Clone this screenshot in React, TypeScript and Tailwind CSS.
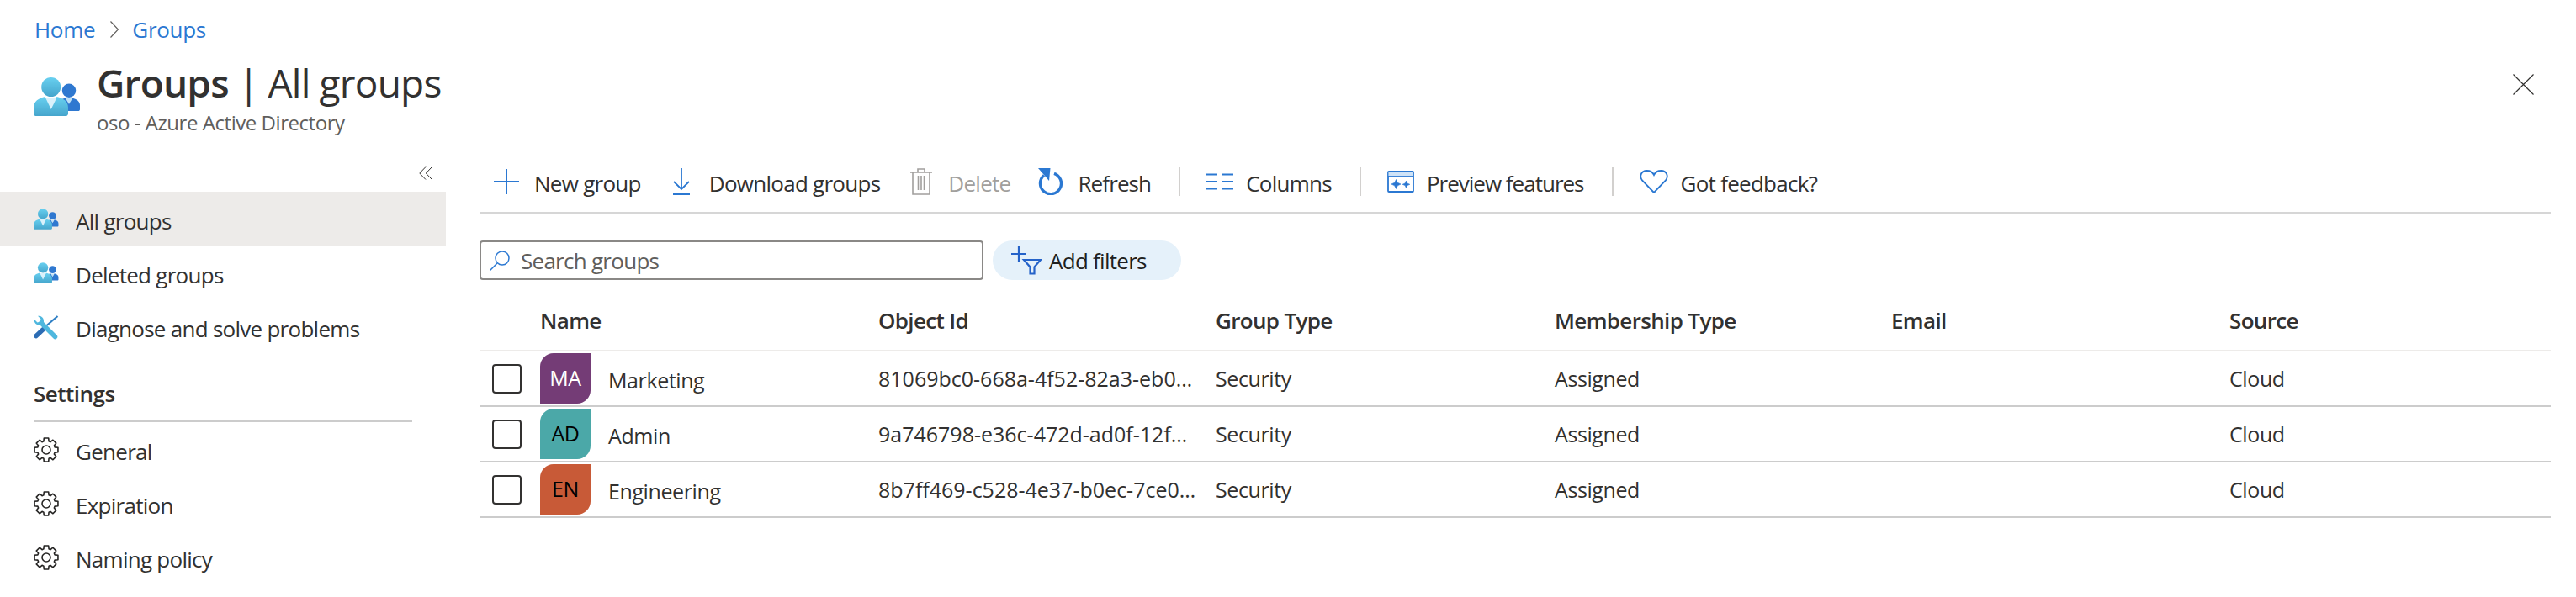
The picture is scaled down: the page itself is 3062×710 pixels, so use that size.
const F = "font-['Open_Sans',sans-serif]";

const gearPath = (() => {
  const pts: string[] = [];
  const p = (deg: number, r: number) => {
    const a = ((deg - 90) * Math.PI) / 180;
    return `${(15 + r * Math.cos(a)).toFixed(2)} ${(15 + r * Math.sin(a)).toFixed(2)}`;
  };
  for (let i = 0; i < 8; i++) {
    const c = i * 45;
    pts.push(p(c - 11, 14.2), p(c + 11, 14.2), p(c + 17, 10.6), p(c + 28, 10.6));
  }
  return "M" + pts.join("L") + "Z";
})();

function GroupsIcon({ className }: { className: string }) {
  return (
    <svg viewBox="0 0 56 46" className={className}>
      <defs>
        <linearGradient id="gfront" x1="0" y1="0" x2="0" y2="1">
          <stop offset="0" stopColor="#68d0f0" />
          <stop offset="1" stopColor="#45a5cc" />
        </linearGradient>
      </defs>
      <circle cx="42" cy="15.700" r="8.200" fill="#2f78d0" />
      <path d="M33 26l5-1.500 4 6 4-6 4 1.500c3 1.500 5 4 5 7v5c0 1.500-1 2-2 2H33z" fill="#2f78d0" />
      <path d="M38 25h8l-4 7z" fill="#bfe0f5" />
      <circle cx="20.700" cy="11.500" r="11.500" fill="url(#gfront)" />
      <path d="M0 43v-7c0-8 6-11 13.500-13l7 10 7-10C35 25 41 28 41 36v7c0 1.500-1 3-2.500 3h-36C1 46 0 44.500 0 43z" fill="url(#gfront)" />
      <path d="M14 24h13.500l-6.800 14z" fill="#d9f1fb" />
    </svg>
  );
}

function Gear() {
  return (
    <svg viewBox="0 0 30 30" className="w-[30px] h-[30px] shrink-0 translate-y-[1px]" fill="none" stroke="#252423" strokeWidth="1.600" strokeLinejoin="round">
      <circle cx="15" cy="15" r="5" />
      <path d={gearPath} />
    </svg>
  );
}

function Wrench() {
  return (
    <svg viewBox="0 0 30 30" className="w-[30px] h-[30px] shrink-0 translate-y-[2px]" fill="none">
      <path d="M12 15L28.500 1" stroke="#2f7fc4" strokeWidth="2.200" />
      <path d="M3 24.500L11 17" stroke="#2c6cb4" strokeWidth="5.500" strokeLinecap="round" />
      <path d="M9 9L25.500 25.500" stroke="#4fb7de" strokeWidth="5.500" strokeLinecap="round" />
      <path d="M1 5l3.500 3.500 3-1 1-3L5 .8C9 0 12.500 3 12 8l-3 3c-4 1.500-9-1-8-6z" fill="#4fb7de" />
    </svg>
  );
}

function SideItem({ icon, label, active }: { icon: React.ReactNode; label: string; active?: boolean }) {
  return (
    <div className={`flex items-center h-16 pl-10 gap-5 text-[26px] tracking-[-0.73px] text-[#323130] ${active ? "bg-[#edebe9]" : ""}`}>
      {icon}
      <span className="translate-y-[3px]">{label}</span>
    </div>
  );
}

function ToolBtn({ icon, label, disabled, gap, className = "", tracking = "tracking-[-0.73px]" }: { icon: React.ReactNode; label: string; disabled?: boolean; gap: string; className?: string; tracking?: string }) {
  return (
    <div className={`flex items-center h-[34px] ${gap} ${className}`}>
      {icon}
      <span className={`text-[26px] ${tracking} translate-y-[2px] ${disabled ? "text-[#a19f9d]" : "text-[#323130]"}`}>{label}</span>
    </div>
  );
}

const Sep = ({ className }: { className: string }) => <div className={`w-[2px] h-[34px] bg-[#d2d0ce] ${className}`} />;

const rows = [
  { abbr: "MA", name: "Marketing", id: "81069bc0-668a-4f52-82a3-eb0…", bg: "bg-[#743c76]", fg: "text-white" },
  { abbr: "AD", name: "Admin", id: "9a746798-e36c-472d-ad0f-12f…", bg: "bg-[#4ba8a8]", fg: "text-black" },
  { abbr: "EN", name: "Engineering", id: "8b7ff469-c528-4e37-b0ec-7ce0…", bg: "bg-[#c85a37]", fg: "text-black" },
];

const COLS = "grid grid-cols-[72px_402px_401px_403px_400px_402px_382px] items-center";

export default function App() {
  return (
    <div className={`w-[3062px] h-[710px] overflow-hidden bg-white ${F}`}>
      <div className="flex items-center pl-[41px] pt-[16px] h-[54px] text-[26px] tracking-[-0.3px] text-[#2b78d2]">
        <span>Home</span>
        <svg viewBox="0 0 10 20" className="w-[10px] h-[20px] ml-[18px] mr-[16px]" fill="none" stroke="#605e5c" strokeWidth="1.200"><path d="M0.500 0.500L9.500 10L0.500 19.500" /></svg>
        <span>Groups</span>
      </div>
      <div className="flex items-start pl-10 pr-[50px] pt-[18px] h-[122px]">
        <GroupsIcon className="w-14 h-[46px] mt-[20px] shrink-0" />
        <div className="ml-[19px] flex-1 -mt-[4px]">
          <div className="text-[46px] tracking-[-0.8px] leading-[60px] text-[#323130]"><span className="font-semibold">Groups</span> | All groups</div>
          <div className="text-[24px] tracking-[-0.45px] leading-[34px] text-[#605e5c] mt-[1px]">oso - Azure Active Directory</div>
        </div>
        <svg viewBox="0 0 25 25" className="w-[25px] h-[25px] mt-[16px]" fill="none" stroke="#323130" strokeWidth="1.200"><path d="M0.500 0.500L24.500 24.500M24.500 0.500L0.500 24.500" /></svg>
      </div>
      <div className="flex">
        <div className="w-[530px] shrink-0">
          <div className="h-[52px] flex justify-end items-start pr-4 pt-[22px]">
            <svg viewBox="0 0 16 16" className="w-4 h-4" fill="none" stroke="#323130" strokeWidth="1"><path d="M8 0.500L0.800 8L8 15.500M15.500 0.500L8.300 8L15.500 15.500" /></svg>
          </div>
          <SideItem active icon={<GroupsIcon className="w-[30px] h-[25px] shrink-0" />} label="All groups" />
          <SideItem icon={<GroupsIcon className="w-[30px] h-[25px] shrink-0" />} label="Deleted groups" />
          <SideItem icon={<Wrench />} label="Diagnose and solve problems" />
          <div className="mx-10 h-[82px] pb-[12px] border-b-2 border-[#cccccc] text-[26px] tracking-[-0.5px] font-semibold text-[#323130] flex items-end">Settings</div>
          <SideItem icon={<Gear />} label="General" />
          <SideItem icon={<Gear />} label="Expiration" />
          <SideItem icon={<Gear />} label="Naming policy" />
        </div>
        <div className="ml-10 w-[2462px]">
          <div className="h-[78px] pt-[23px] border-b-2 border-[#d6d6d6] flex items-start pl-[17px]">
            <ToolBtn gap="gap-[18px]" icon={<svg viewBox="0 0 30 30" className="w-[30px] h-[30px]" fill="none" stroke="#2b78d2" strokeWidth="2"><path d="M15 0v30M0 15h30" /></svg>} label="New group" />
            <ToolBtn className="ml-[38px]" gap="gap-[23px]" icon={<svg viewBox="0 0 20 32" className="w-5 h-8" fill="none" stroke="#2b78d2" strokeWidth="1.800"><path d="M10 0v25M1 16l9 9 9-9M0 31h20" /></svg>} label="Download groups" />
            <ToolBtn className="ml-[36px]" gap="gap-[19px]" disabled icon={<svg viewBox="0 0 26 32" className="w-[26px] h-8" fill="none" stroke="#a19f9d" strokeWidth="1.600"><path d="M0 5h26M9 5V1h8v4M3 5v26h20V5M9.500 9v17M13 9v17M16.500 9v17" /></svg>} label="Delete" />
            <ToolBtn className="ml-[33px]" gap="gap-[16px]" tracking="tracking-[-0.9px]" icon={<svg viewBox="0 0 31 32" className="w-[31px] h-8" fill="none"><path d="M19 6.300A12.500 12.500 0 1 1 7 8.500" stroke="#2b78d2" strokeWidth="3.400" /><path d="M0 0h14.500l-1.500 15z" fill="#2b78d2" /></svg>} label="Refresh" />
            <Sep className="ml-[33px]" />
            <ToolBtn className="ml-[30px]" gap="gap-[15px]" icon={<svg viewBox="0 0 33 20" className="w-[33px] h-5" fill="none" stroke="#2b78d2" strokeWidth="2.200"><path d="M0 1.500h14M19 1.500h14M0 10h14M19 10h14M0 18.500h14M19 18.500h14" /></svg>} label="Columns" />
            <Sep className="ml-[33px]" />
            <ToolBtn className="ml-[31px]" gap="gap-[15px]" tracking="tracking-[-1px]" icon={<svg viewBox="0 0 32 26" className="w-8 h-[26px]" fill="none" stroke="#2b78d2" strokeWidth="1.800"><rect x="1" y="1" width="30" height="24" rx="1" /><path d="M1.500 2h29v4.500h-29z" fill="#cfe3f7" stroke="none" /><path d="M1 7h30" /><path d="M10.500 10.500l1.800 3.700 3.700 1.800-3.700 1.800-1.800 3.700-1.800-3.700-3.700-1.800 3.700-1.800z" fill="#2b78d2" strokeWidth="0.600" /><path d="M22.500 12l1.300 3 3 1.300-3 1.300-1.300 3-1.300-3-3-1.300 3-1.300z" fill="#2b78d2" strokeWidth="0.600" /></svg>} label="Preview features" />
            <Sep className="ml-[33px]" />
            <ToolBtn className="ml-[31px]" gap="gap-[15px]" icon={<svg viewBox="0 0 34 28" className="w-[34px] h-7" fill="none" stroke="#2b78d2" strokeWidth="1.800"><path d="M17 27L3 12.500C-.5 8 1.500 1 8.500 1c4 0 7 2 8.500 5C18.500 3 21.500 1 25.500 1c7 0 9 7 5.500 11.500z" /></svg>} label="Got feedback?" />
          </div>
          <div className="flex gap-[11px] mt-[32px] h-[47px]">
            <div className="w-[599px] h-[47px] border-2 border-[#8a8886] rounded-[4px] flex items-center pl-[10px] gap-[13px]">
              <svg viewBox="0 0 24 24" className="w-6 h-6" fill="none" stroke="#2b78d2" strokeWidth="1.500"><circle cx="15" cy="9" r="8" /><path d="M9 15L0.500 23.500" /></svg>
              <span className="text-[26px] tracking-[-0.73px] translate-y-[1px] text-[#605e5c]">Search groups</span>
            </div>
            <div className="w-[224px] h-[47px] rounded-full bg-[#e5f1fa] flex items-center pl-[22px] gap-[9px]">
              <svg viewBox="0 0 36 34" className="w-9 h-[34px] shrink-0" fill="none" stroke="#2563c9" strokeWidth="2.200"><path d="M9 0v18M0 9h18M15 16h20l-7.500 8.500v8h-5v-8z" /></svg>
              <span className="text-[26px] tracking-[-0.73px] translate-y-[1px] text-[#201f1e]">Add filters</span>
            </div>
          </div>
          <div className={`${COLS} h-[34px] mt-[29px] text-[26px] tracking-[-0.65px] font-semibold text-[#323130]`}>
            <div />
            <div>Name</div>
            <div>Object Id</div>
            <div>Group Type</div>
            <div>Membership Type</div>
            <div>Email</div>
            <div>Source</div>
          </div>
          <div className="h-[22px] border-b-2 border-[#edebe9]" />
          {rows.map((r) => (
            <div key={r.abbr} className={`${COLS} h-[66px] border-b-2 border-[#cccccc] text-[25px] tracking-[-0.4px] text-[#323130]`}>
              <div className="pl-[15px]"><div className="w-[35px] h-[35px] border-2 border-[#323130] rounded-[4px]" /></div>
              <div className="flex items-center gap-[21px]">
                <div className={`w-[60px] h-[60px] flex items-center justify-center rounded-tl-[16px] rounded-br-[16px] ${r.bg} ${r.fg}`}>{r.abbr}</div>
                <span className="translate-y-[3px]">{r.name}</span>
              </div>
              <div className="translate-y-[1px] whitespace-nowrap tracking-normal">{r.id}</div>
              <div className="translate-y-[1px]">Security</div>
              <div className="translate-y-[1px]">Assigned</div>
              <div />
              <div className="translate-y-[1px]">Cloud</div>
            </div>
          ))}
        </div>
      </div>
    </div>
  );
}
